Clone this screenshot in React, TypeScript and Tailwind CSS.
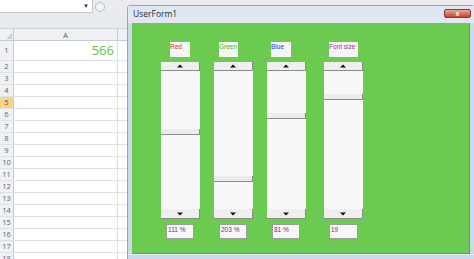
import React from "react";

const Up = () => (
  <svg width="6" height="4" viewBox="0 0 6 4"><polygon points="0,3.5 3,0.5 6,3.5" fill="#111" /></svg>
);
const Down = () => (
  <svg width="6" height="4" viewBox="0 0 6 4"><polygon points="0,0.5 3,3.5 6,0.5" fill="#111" /></svg>
);

type Col = {
  label: string;
  labelColor: string;
  labelCls: string;
  spacer: string;
  value: string;
  boxCls: string;
  colCls: string;
};

const cols: Col[] = [
  { label: "Red", labelColor: "text-[#c8323a]", labelCls: "ml-[9px] w-[20px]", spacer: "h-[58px]", value: "111 %", boxCls: "ml-[5px] w-[28px]", colCls: "ml-[29px]" },
  { label: "Green", labelColor: "text-[#3fb548]", labelCls: "ml-[5px] w-[19px]", spacer: "h-[105px]", value: "203 %", boxCls: "ml-[5px] w-[28px]", colCls: "ml-[14px]" },
  { label: "Blue", labelColor: "text-[#2a2ae6]", labelCls: "ml-[4px] w-[20px]", spacer: "h-[42px]", value: "81 %", boxCls: "ml-[5px] w-[28px]", colCls: "ml-[14px]" },
  { label: "Font size", labelColor: "text-[#9b2ea5]", labelCls: "ml-[5px] w-[29px]", spacer: "h-[23px]", value: "19", boxCls: "ml-[5px] w-[29px]", colCls: "ml-[18px]" },
];

const rows = Array.from({ length: 18 }, (_, i) => i + 1);

export default function App() {
  return (
    <div className="relative w-[474px] h-[259px] overflow-hidden bg-white font-['Liberation_Sans',sans-serif]">
      {/* Spreadsheet */}
      <div className="flex flex-col">
        <div className="flex h-[13px] bg-[#e9ebee]">
          <div className="w-[93px] bg-white border-b border-r border-[#c3c8cf] flex items-center justify-end pr-[3px]">
            <span className="text-[6px] leading-none text-[#333]">▼</span>
          </div>
          <div className="ml-[2px] mt-[2px] w-[10px] h-[10px] rounded-full border border-[#b8bdc4] bg-[#f2f3f5]" />
          <div className="flex-1" />
        </div>
        <div className="h-[16px] bg-[#e7eaee] border-b border-[#cdd2d9]" />
        <div className="flex h-[12px] bg-[#eff1f4] border-b border-[#c6ccd4]">
          <div className="w-[14px] border-r border-[#c6ccd4] flex items-end justify-end p-[1px]">
            <div className="w-0 h-0 border-l-[6px] border-l-transparent border-b-[6px] border-b-[#c9ced5]" />
          </div>
          <div className="w-[104px] border-r border-[#c6ccd4] flex items-center justify-center text-[8px] text-[#4f5f75] font-['Open_Sans',sans-serif]">A</div>
          <div className="flex-1" />
        </div>
        {rows.map((r) => (
          <div key={r} className={`flex ${r === 1 ? "h-[20px]" : "h-[12px]"} border-b border-[#dde1e6]`}>
            <div
              className={`w-[14px] border-r border-[#c6ccd4] flex items-center justify-center text-[7.5px] font-['Open_Sans',sans-serif] ${
                r === 5 ? "bg-[#f8d48a] text-[#6b4d1c]" : "bg-[#eff1f4] text-[#52647c]"
              }`}
            >
              {r}
            </div>
            <div className="w-[104px] border-r border-[#dde1e6] flex items-center justify-end pr-[3px]">
              {r === 1 && <span className="text-[13px] leading-none text-[#62bf46] font-['Open_Sans',sans-serif]">566</span>}
            </div>
            <div className="flex-1" />
          </div>
        ))}
      </div>

      {/* UserForm window */}
      <div className="absolute left-[127px] top-[5px] w-[348px] h-[258px] border border-[#97a7ba] rounded-t-[3px] bg-[#cbdaeb] flex flex-col">
        <div className="h-[17px] flex items-center bg-[#dfe8f2] pl-[5px] pr-[3px]">
          <span className="text-[8.5px] leading-none text-[#1e2a3a] font-['Open_Sans',sans-serif]">UserForm1</span>
          <div className="flex-1" />
          <div className="w-[27px] h-[9px] -mt-[2px] rounded-[2px] border border-[#8c3a30] bg-gradient-to-b from-[#e9a594] to-[#c8402f] flex items-center justify-center">
            <span className="text-[7px] leading-none text-white font-bold">x</span>
          </div>
        </div>
        <div className="mx-[4px] h-[231px] bg-[#6dca50] border-r border-b border-[#5aa845] flex items-start">
          {cols.map((c) => (
            <div key={c.label} className={`${c.colCls} w-[39px] flex flex-col`}>
              <div className={`${c.labelCls} mt-[19px] h-[15px] bg-[#f5f5f5] text-[6.5px] leading-none pt-[2px] whitespace-nowrap ${c.labelColor}`}>
                {c.label}
              </div>
              <div className="mt-[5px] h-[157px] bg-[#f8f8f8] flex flex-col">
                <div className="h-[9px] bg-[#efefef] border-b border-r border-[#8a8a8a] flex items-center justify-center">
                  <Up />
                </div>
                <div className={c.spacer} />
                <div className="h-[6px] bg-[#ececec] border-b border-r border-[#8a8a8a]" />
                <div className="flex-1" />
                <div className="h-[10px] bg-[#efefef] border-b border-r border-[#8a8a8a] flex items-center justify-center">
                  <Down />
                </div>
              </div>
              <div className={`${c.boxCls} mt-[5px] h-[15px] bg-[#f6f6f6] border border-[#9c9c9c] text-[6.5px] leading-none pt-[2px] pl-[1px] text-[#862a86] whitespace-nowrap`}>
                {c.value}
              </div>
            </div>
          ))}
        </div>
        <div className="flex-1 border-t border-[#e6eef7]" />
      </div>
    </div>
  );
}
